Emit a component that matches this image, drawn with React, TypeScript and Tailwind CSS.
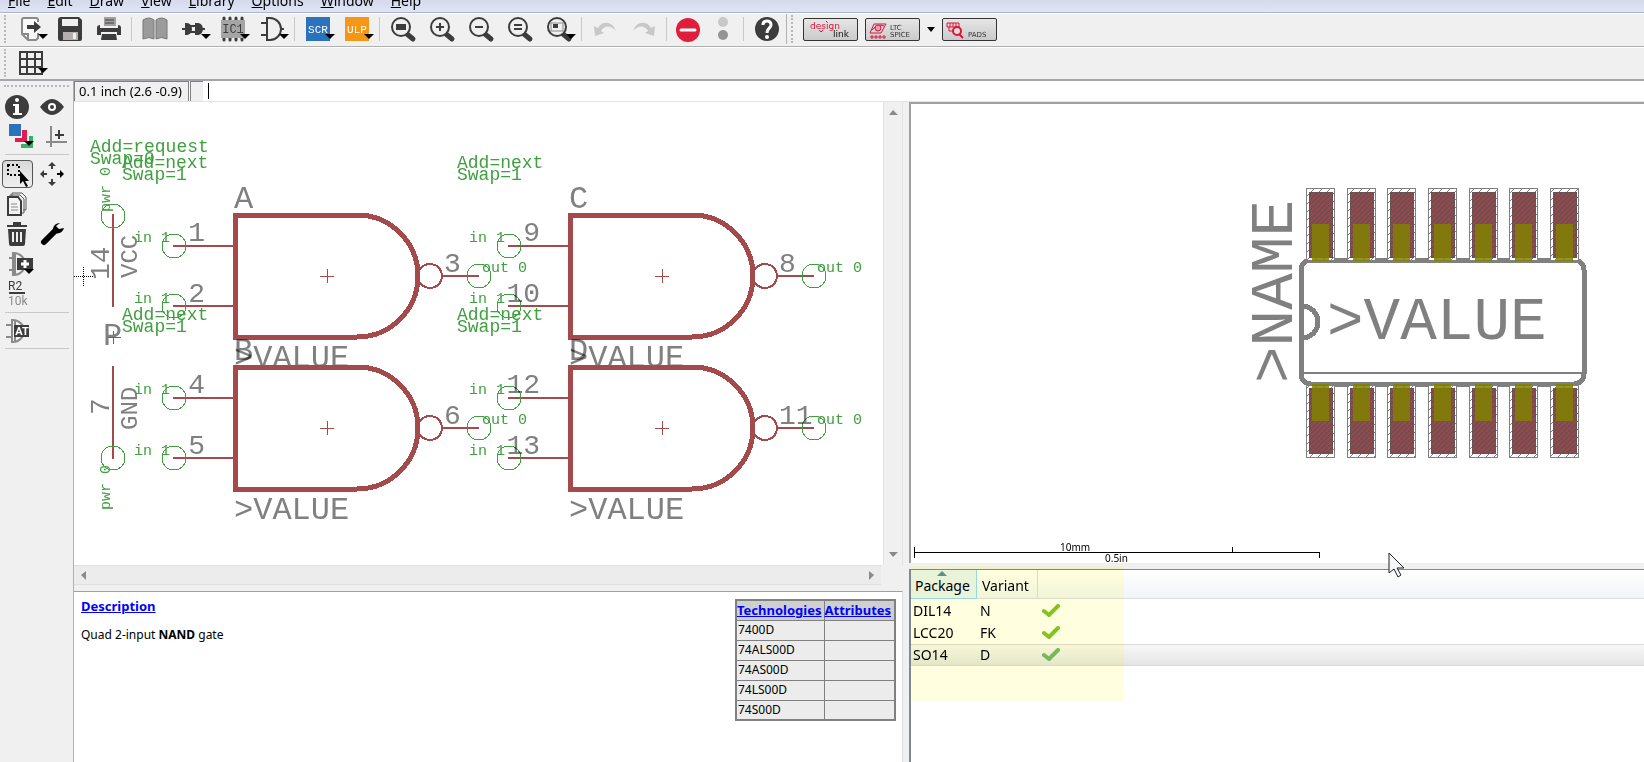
import React from 'react';

const menus = ['File', 'Edit', 'Draw', 'View', 'Library', 'Options', 'Window', 'Help'];

const technologies = ['7400D', '74ALS00D', '74AS00D', '74LS00D', '74S00D'];

const packages = [
    { name: 'DIL14', variant: 'N', selected: false },
    { name: 'LCC20', variant: 'FK', selected: false },
    { name: 'SO14', variant: 'D', selected: true },
];

const gates = [
    { x: 253, y: 174, name: 'A', pins: ['1', '2', '3'] },
    { x: 253, y: 326, name: 'B', pins: ['4', '5', '6'] },
    { x: 588, y: 174, name: 'C', pins: ['9', '10', '8'] },
    { x: 588, y: 326, name: 'D', pins: ['12', '13', '11'] },
];

const padColumns = [395, 436, 476, 517, 558, 598, 639];

/* ---------- icons, drawn around their own centre ---------- */

function Icon({ children, menu = false }: { children: React.ReactNode; menu?: boolean }) {
    return (
        <svg width="36" height="28" viewBox="-18 -14 36 28" fill="none" className="shrink-0" aria-hidden="true">
            {children}
            {menu && <path d="M7 5h10l-5 5z" fill="#000" />}
        </svg>
    );
}

function Lens({ children }: { children: React.ReactNode }) {
    return (
        <>
            <path d="M4 5l6 5" stroke="#3c3c3c" strokeWidth="5" strokeLinecap="round" />
            <circle cx="-2" cy="-2" r="9" fill="#f0f0f0" stroke="#3c3c3c" strokeWidth="2" />
            {children}
        </>
    );
}

const topIcons = {
    use: (
        <>
            <path d="M7 -7V-9a2 2 0 0 0-2-2H-7a2 2 0 0 0-2 2V5l6 6H5l2-2V4M-9 5h6v6" stroke="#8a8a8a" strokeWidth="2" fill="#fafafa" />
            <path d="M-4 -4H3V-8l7 6-7 6V0H-4z" fill="#3c3c3c" />
        </>
    ),
    save: (
        <>
            <path d="M-12 -9a3 3 0 0 1 3-3H9l3 3V10a2 2 0 0 1-2 2H-10a2 2 0 0 1-2-2z" fill="#3c3c3c" />
            <path d="M-8 -10H8v7H-8z" fill="#efefef" />
            <path d="M-7 3H8v8H-7z" fill="#b4aeae" />
            <path d="M3 4h3v6H3z" fill="#efefef" />
        </>
    ),
    print: (
        <>
            <path d="M-5 -12H7v9H-5z" fill="#a5a0a0" />
            <path d="M-4 -9h9M-4 -6h9" stroke="#3c3c3c" strokeWidth="1" />
            <path d="M-12 -1a3 3 0 0 1 3-3v3H9v-3a3 3 0 0 1 3 3v7H8V3H-8v3h-4z" fill="#3c3c3c" />
            <path d="M-7 5H7l1 6H-8z" fill="#3c3c3c" />
        </>
    ),
    book: <path d="M-12 -9Q-6 -13 -1 -9V10Q-6 7 -12 10zM1 -9Q6 -13 12 -9V10Q6 7 1 10z" fill="#9b9b9b" stroke="#777" strokeWidth="1" />,
    device: (
        <>
            <path d="M-12 0h3M-4 -3h5M-4 3h5M8 0h3" stroke="#3c3c3c" strokeWidth="2" />
            <path d="M-9 -6h2a5 6 0 0 1 0 12h-2zM1 -6h3a5 6 0 0 1 0 12h-3z" fill="#3c3c3c" />
        </>
    ),
    ic: (
        <>
            <path d="M-9 -11v2M-3 -11v2M3 -11v2M9 -11v2M-9 11V9M-3 11V9M3 11V9M9 11V9" stroke="#3c3c3c" strokeWidth="3" strokeLinecap="round" />
            <path d="M-12 -9H12V9H-12z" fill="#a5a5a5" />
            <text x="0" y="4" fontSize="12" textAnchor="middle" fill="#3c3c3c" className="font-['Liberation_Mono',monospace]">IC1</text>
        </>
    ),
    gate: <path d="M-5 -11h3a11 11 0 0 1 0 22h-3zM-11 -6h6M-11 6h6M9 0h3" stroke="#3c3c3c" strokeWidth="2" />,
    scr: (
        <>
            <path d="M-12 -12H12V12H-12z" fill="#2a72bb" />
            <text x="0" y="4" fontSize="11" textAnchor="middle" fill="#fff" className="font-['Liberation_Mono',monospace]">SCR</text>
        </>
    ),
    ulp: (
        <>
            <path d="M-12 -12H12V12H-12z" fill="#f59616" />
            <text x="0" y="4" fontSize="11" textAnchor="middle" fill="#fff" className="font-['Liberation_Mono',monospace]">ULP</text>
        </>
    ),
    fit: <Lens><path d="M-7 -5H3v6H-7z" fill="#3c3c3c" /></Lens>,
    zoomIn: <Lens><path d="M-6 -2H2M-2 -6V2" stroke="#3c3c3c" strokeWidth="2" /></Lens>,
    zoomOut: <Lens><path d="M-6 -2H2" stroke="#3c3c3c" strokeWidth="2" /></Lens>,
    redraw: <Lens><path d="M-6 -4H2M-6 0H2" stroke="#3c3c3c" strokeWidth="2" /></Lens>,
    select: (
        <Lens>
            <path d="M-8 -6H4V2H-8z" stroke="#8a8a8a" />
            <path d="M-6 -5h5v4h-5z" fill="#3c3c3c" />
        </Lens>
    ),
    undo: <path d="M11 2C8 -8 -3 -9 -7 -1L-11 -3-10 7 -1 4-4 2C-1 -4 6 -4 11 2z" fill="#c8c8c8" />,
    redo: <path d="M-11 2C-8 -8 3 -9 7 -1L11 -3 10 7 1 4 4 2C1 -4 -6 -4 -11 2z" fill="#c8c8c8" />,
    stop: (
        <>
            <circle cx="0" cy="1" r="12" fill="#df1e3c" />
            <path d="M-7 1H7" stroke="#fff" strokeWidth="3" strokeLinecap="round" />
        </>
    ),
    go: (
        <>
            <circle cx="0" cy="-7" r="5" fill="#c8c8c8" />
            <circle cx="0" cy="6" r="5" fill="#949494" />
        </>
    ),
    help: (
        <>
            <circle cx="0" cy="0" r="12" fill="#3c3c3c" />
            <path d="M-4 -4Q-4 -8 0 -8T4 -4C4 -1 0 -1 0 4" stroke="#fff" strokeWidth="3" />
            <circle cx="0" cy="8" r="2" fill="#fff" />
        </>
    ),
    grid: <path d="M-11 -11H11V11H-11zM-4 -11V11M4 -11V11M-11 -4H11M-11 4H11" stroke="#3c3c3c" strokeWidth="2" />,
};

const sideIcons = {
    info: (
        <>
            <circle cx="0" cy="0" r="12" fill="#3c3c3c" />
            <path d="M-4 -3H2V6H5V8H-4V6H-2V-1H-4z" fill="#fff" />
            <circle cx="0" cy="-7" r="2" fill="#fff" />
        </>
    ),
    show: (
        <>
            <path d="M-12 0Q-6 -8 0 -8T12 0Q6 8 0 8T-12 0z" fill="#3c3c3c" />
            <circle cx="0" cy="0" r="3" stroke="#fff" strokeWidth="2" />
        </>
    ),
    layers: (
        <>
            <path d="M4 12V8h8V0h4v12z" fill="#37b06a" />
            <path d="M-2 6V2h7v-8h5V6z" fill="#dc1e50" />
            <path d="M-8 -12H4V0H-8z" fill="#2a72bb" />
        </>
    ),
    mark: (
        <>
            <path d="M-1 -10V11M-6 6H15" stroke="#8a8a8a" strokeWidth="2" />
            <path d="M3 -1h9M7 -6v9" stroke="#3c3c3c" strokeWidth="2" />
        </>
    ),
    group: (
        <>
            <path d="M-9 -9H2V1H-9z" stroke="#000" strokeWidth="2" strokeDasharray="2 2" />
            <path d="M3 -3V10l3-3 3 6 2-1-3-5h4z" fill="#000" />
        </>
    ),
    move: (
        <>
            <path d="M0 -12l4 4H1v3h-2v-3h-3zM0 12l4-4H1V5h-2v3h-3zM-12 0l4-4v3h3v2h-3v3z" fill="#3c3c3c" />
            <path d="M12 0L8 -4v3H5v2h3v3z" fill="#000" />
        </>
    ),
    copy: (
        <>
            <path d="M-5 -8V-11H5l4 4V6H6" stroke="#5a5a5a" />
            <path d="M-7 -6V-9H3l4 4V9H4" stroke="#5a5a5a" />
            <path d="M-9 -7H1l3 4V11H-9z" stroke="#3c3c3c" strokeWidth="2" fill="#f4f4f4" />
            <path d="M-6 0h6M-6 3h7M-6 6h7" stroke="#8a8a8a" />
        </>
    ),
    trash: (
        <>
            <path d="M-10 -9H-4V-12H4v3h6v2H-10z" fill="#3c3c3c" />
            <path d="M-9 -5H9L8 10a2 2 0 0 1-2 2H-6a2 2 0 0 1-2-2z" fill="#3c3c3c" />
            <path d="M-4 -2V8M0 -2V8M4 -2V8" stroke="#efefef" strokeWidth="2" />
        </>
    ),
    wrench: (
        <>
            <path d="M-8 8L3 -3" stroke="#000" strokeWidth="6" strokeLinecap="round" />
            <path d="M8 -11a7 7 0 0 0-7 9 7 7 0 0 0 11-4l-5 1-3-3z" fill="#000" />
        </>
    ),
    add: (
        <>
            <path d="M-4 -11h1a11 11 0 0 1 0 22h-1zM-8 -6h4M-8 6h4M-2 -11V11" stroke="#8a8a8a" strokeWidth="2" />
            <path d="M0 -6H16V6H0z" fill="#3c3c3c" />
            <path d="M4 0h8M8 -4v8" stroke="#fff" strokeWidth="3" />
        </>
    ),
    value: (
        <>
            <text x="-9" y="-4" fontSize="12" fill="#3c3c3c" className="font-[Roboto,sans-serif]">R2</text>
            <path d="M-8 -1H8" stroke="#3c3c3c" strokeWidth="2" />
            <text x="-9" y="11" fontSize="12" fill="#8a8a8a" className="font-[Roboto,sans-serif]">10k</text>
        </>
    ),
    attribute: (
        <>
            <path d="M-5 -11h1a11 11 0 0 1 0 22h-1zM-11 -6h6M-11 6h6M-2 -11V11" stroke="#8a8a8a" strokeWidth="2" />
            <path d="M-3 -6H12V6H-3z" fill="#3c3c3c" />
            <text x="5" y="4" fontSize="11" textAnchor="middle" fill="#fff" className="font-bold font-[Roboto,sans-serif]">AT</text>
        </>
    ),
};

/* ---------- tool bars ---------- */

function Tool({ label, menu, children }: { label: string; menu?: boolean; children: React.ReactNode }) {
    return (
        <button type="button" aria-label={label} title={label} className="flex w-[39px] justify-center">
            <Icon menu={menu}>{children}</Icon>
        </button>
    );
}

function Separator() {
    return <div className="mx-[3px] h-6 w-px bg-[#c8c8c8]" />;
}

function Handle() {
    return <div className="ml-1 h-7 w-0 border-l-2 border-dotted border-[#b8b8b8]" />;
}

function MenuBar() {
    return (
        <nav className="h-[13px] overflow-hidden border-b border-[#aab4d0] bg-linear-to-b from-[#d5daec] to-[#e0e5f4] pl-2">
            <div className="-mt-[9px] flex gap-[17px] text-[14px] leading-5">
                {menus.map((item) => (
                    <button key={item} type="button">
                        <span className="underline">{item[0]}</span>
                        {item.slice(1)}
                    </button>
                ))}
            </div>
        </nav>
    );
}

function LinkButton({ label, children }: { label: string; children: React.ReactNode }) {
    return (
        <button
            type="button"
            aria-label={label}
            className="h-[23px] w-[55px] rounded-xs border border-[#333] bg-linear-to-b from-[#e6e6e6] to-[#cacaca]"
        >
            <svg width="53" height="21" viewBox="0 0 53 21" fill="none" className="font-['DejaVu_Sans',sans-serif]">
                {children}
            </svg>
        </button>
    );
}

function ActionBar() {
    return (
        <div className="flex h-[34px] items-center border-t border-b border-t-white border-b-[#b0b0b0] pb-[2px]">
            <Handle />
            <div className="ml-[5px] flex items-center">
                <Tool label="Use" menu>{topIcons.use}</Tool>
                <Tool label="Save">{topIcons.save}</Tool>
                <Tool label="Print">{topIcons.print}</Tool>
                <Separator />
                <Tool label="Library">{topIcons.book}</Tool>
                <Tool label="Device" menu>{topIcons.device}</Tool>
                <Tool label="Package" menu>{topIcons.ic}</Tool>
                <Tool label="Symbol" menu>{topIcons.gate}</Tool>
                <Separator />
                <Tool label="Script" menu>{topIcons.scr}</Tool>
                <Tool label="User language program" menu>{topIcons.ulp}</Tool>
                <Separator />
                <Tool label="Fit">{topIcons.fit}</Tool>
                <Tool label="Zoom in">{topIcons.zoomIn}</Tool>
                <Tool label="Zoom out">{topIcons.zoomOut}</Tool>
                <Tool label="Redraw">{topIcons.redraw}</Tool>
                <Tool label="Select" menu>{topIcons.select}</Tool>
                <Separator />
                <Tool label="Undo">{topIcons.undo}</Tool>
                <Tool label="Redo">{topIcons.redo}</Tool>
                <Separator />
                <button type="button" aria-label="Stop" className="flex w-[35px] justify-center"><Icon>{topIcons.stop}</Icon></button>
                <button type="button" aria-label="Go" className="flex w-[35px] justify-center"><Icon>{topIcons.go}</Icon></button>
                <Separator />
                <Tool label="Help">{topIcons.help}</Tool>
            </div>
            <div className="h-full w-px bg-[#b0b0b0]" />
            <div className="mr-[10px]"><Handle /></div>
            <div className="flex items-center gap-[7px]">
                <LinkButton label="Design link">
                    <text x="6" y="10" fontSize="9" fill="#dc143c">design</text>
                    <path d="M15 11l2 2 2-2M22 3l1-1" stroke="#dc143c" />
                    <text x="29" y="18" fontSize="9" fill="#111">link</text>
                </LinkButton>
                <LinkButton label="LTC Spice">
                    <path d="M8 5H20L15 14H4z" stroke="#dc143c" />
                    <path d="M6 11Q12 4 18 7" stroke="#dc143c" />
                    <circle cx="12" cy="9" r="3" fill="#e8a0a8" stroke="#dc143c" />
                    <path d="M5 17h2v2H5zM9 17h2v2H9zM13 17h2v2h-2zM17 17h2v2h-2z" stroke="#dc143c" />
                    <text x="24" y="11" fontSize="7" fill="#333">LTC</text>
                    <text x="24" y="18" fontSize="7" fill="#333">SPICE</text>
                </LinkButton>
                <button type="button" aria-label="More" className="w-2">
                    <svg width="8" height="5" viewBox="0 0 8 5"><path d="M0 0h8L4 5z" fill="#000" /></svg>
                </button>
                <LinkButton label="Pads">
                    <path d="M4 4h12v4H4zM7 4v4M10 4v4M13 4v4M6 8v4h4" stroke="#dc143c" />
                    <circle cx="14" cy="12" r="4" fill="#ddd" stroke="#dc143c" strokeWidth="2" />
                    <path d="M16 15l4 4" stroke="#dc143c" strokeWidth="2" />
                    <text x="25" y="18" fontSize="7" fill="#333">PADS</text>
                </LinkButton>
            </div>
        </div>
    );
}

function SideTool({ label, menu, active, children }: { label: string; menu?: boolean; active?: boolean; children: React.ReactNode }) {
    return (
        <button
            type="button"
            aria-label={label}
            className={
                active
                    ? 'flex h-7 w-[31px] items-center justify-center self-center justify-self-center rounded-sm border border-[#555] bg-linear-to-b from-[#d8d8d8] to-[#efefef]'
                    : 'flex items-center justify-center'
            }
        >
            <Icon menu={menu}>{children}</Icon>
        </button>
    );
}

function SideBar() {
    return (
        <aside className="w-[74px] shrink-0 border-r border-[#b0b0b0] pr-1">
            <div className="mt-1 ml-1 border-t-2 border-dotted border-[#b8b8b8]" />
            <div className="mt-[5px] grid auto-rows-[29px] grid-cols-2">
                <SideTool label="Info">{sideIcons.info}</SideTool>
                <SideTool label="Show">{sideIcons.show}</SideTool>
                <SideTool label="Layers" menu>{sideIcons.layers}</SideTool>
                <SideTool label="Mark">{sideIcons.mark}</SideTool>
            </div>
            <div className="my-1 ml-[5px] h-px bg-[#c8c8c8]" />
            <div className="grid auto-rows-[30px] grid-cols-2">
                <SideTool label="Group" active>{sideIcons.group}</SideTool>
                <SideTool label="Move">{sideIcons.move}</SideTool>
                <SideTool label="Copy">{sideIcons.copy}</SideTool>
                <div />
                <SideTool label="Delete">{sideIcons.trash}</SideTool>
                <SideTool label="Change">{sideIcons.wrench}</SideTool>
                <SideTool label="Add" menu>{sideIcons.add}</SideTool>
                <div />
                <SideTool label="Value">{sideIcons.value}</SideTool>
            </div>
            <div className="my-[3px] ml-[5px] h-px bg-[#c8c8c8]" />
            <div className="grid auto-rows-[30px] grid-cols-2">
                <SideTool label="Attribute">{sideIcons.attribute}</SideTool>
            </div>
            <div className="mt-[2px] ml-[5px] h-px bg-[#c8c8c8]" />
        </aside>
    );
}

/* ---------- symbol drawing ---------- */

function Gate({ x, y, name, pins }: { x: number; y: number; name: string; pins: string[] }) {
    return (
        <g transform={`translate(${x} ${y})`}>
            <path d="M-92 -61H30A61 61 0 0 1 30 61H-92z" stroke="#a54a4a" strokeWidth="5" />
            <circle cx="103" cy="0" r="12" stroke="#a54a4a" strokeWidth="2" />
            <path d="M-154 -30H-94M-154 30H-94M115 0H152" stroke="#a54a4a" strokeWidth="2" />
            <path d="M-7 0H7M0 -7V7" stroke="#a54a4a" />
            <g stroke="#40a040">
                <circle cx="-153" cy="-30" r="12" />
                <circle cx="-153" cy="30" r="12" />
                <circle cx="152" cy="0" r="12" />
            </g>
            <g fill="#40a040">
                <text x="-193" y="-34" fontSize="15">in 1</text>
                <text x="-193" y="27" fontSize="15">in 1</text>
                <text x="155" y="-4" fontSize="15">out 0</text>
                <text x="-205" y="-108" fontSize="18">Add=next</text>
                <text x="-205" y="-96" fontSize="18">Swap=1</text>
            </g>
            <g fill="#808080" className="mix-blend-multiply">
                <text x="-122" y="-35" fontSize="28" textAnchor="end">{pins[0]}</text>
                <text x="-122" y="26" fontSize="28" textAnchor="end">{pins[1]}</text>
                <text x="117" y="-4" fontSize="28">{pins[2]}</text>
                <text x="-93" y="-68" fontSize="32">{name}</text>
                <text x="-93" y="91" fontSize="32">&gt;VALUE</text>
            </g>
        </g>
    );
}

function SymbolCanvas() {
    return (
        <svg
            width="809"
            height="463"
            viewBox="0 0 809 463"
            fill="none"
            shapeRendering="crispEdges"
            className="font-['Liberation_Mono',monospace]"
        >
            <path d="M0 174H19M9 165V184" stroke="#000" strokeDasharray="1 1" />
            <path d="M39 112V205M39 264V357" stroke="#a54a4a" strokeWidth="2" />
            <path d="M33 235H47M39 229V242" stroke="#a54a4a" />
            <circle cx="39" cy="114" r="12" stroke="#40a040" />
            <circle cx="39" cy="356" r="12" stroke="#40a040" />
            <g fill="#40a040">
                <text x="16" y="50" fontSize="18">Add=request</text>
                <text x="16" y="62" fontSize="18">Swap=0</text>
                <text transform="translate(36 110) rotate(-90)" fontSize="15">pwr 0</text>
                <text transform="translate(36 408) rotate(-90)" fontSize="15">pwr 0</text>
            </g>
            <g fill="#808080">
                <text transform="translate(35 178) rotate(-90)" fontSize="28">14</text>
                <text transform="translate(35 313) rotate(-90)" fontSize="28">7</text>
                <text transform="translate(63 176) rotate(-90)" fontSize="24">VCC</text>
                <text transform="translate(63 328) rotate(-90)" fontSize="24">GND</text>
                <text x="29" y="243" fontSize="32">P</text>
            </g>
            {gates.map((gate) => (
                <Gate key={gate.name} {...gate} />
            ))}
        </svg>
    );
}

/* ---------- package drawing ---------- */

function Pad({ x, y, stopY, leadY }: { x: number; y: number; stopY: number; leadY: number }) {
    return (
        <g>
            <rect x={x} y={stopY} width="28" height="72" fill="url(#stop)" stroke="#808080" />
            <rect x={x + 3} y={y} width="23" height="65" fill="#a8414b" />
            <rect x={x + 3} y={y} width="23" height="65" fill="url(#copper)" stroke="#6a5252" />
            <rect x={x + 6} y={leadY} width="17" height="37" fill="#808000" fillOpacity="0.85" />
        </g>
    );
}

function PackageCanvas() {
    return (
        <svg
            width="733"
            height="459"
            viewBox="0 0 733 459"
            fill="none"
            shapeRendering="crispEdges"
            className="font-['Liberation_Mono',monospace]"
        >
            <defs>
                <pattern id="stop" width="8" height="8" patternUnits="userSpaceOnUse">
                    <rect width="8" height="8" fill="#fff" />
                    <path d="M0 8L8 0" stroke="#808080" />
                </pattern>
                <pattern id="copper" width="5" height="5" patternUnits="userSpaceOnUse">
                    <path d="M-1 1L1 -1M-1 6L6 -1M4 6L6 4" stroke="#6a5252" strokeWidth="2" shapeRendering="auto" />
                </pattern>
            </defs>
            <rect x="390" y="156" width="283" height="124" rx="10" stroke="#808080" strokeWidth="5" />
            <path d="M390 269H673" stroke="#808080" strokeWidth="2" />
            <path d="M391 202a16 16 0 0 1 0 32" stroke="#808080" strokeWidth="5" />
            {padColumns.map((x) => (
                <g key={x}>
                    <Pad x={x} y={88} stopY={84} leadY={120} />
                    <Pad x={x} y={284} stopY={281} leadY={280} />
                </g>
            ))}
            <g fill="#808080" fontSize="61">
                <text x="416" y="235">&gt;VALUE</text>
                <text transform="translate(381 279) rotate(-90)">&gt;NAME</text>
            </g>
            <path d="M3 443V454M3 448H409M321 448V443M408 448V454" stroke="#000" />
            <g fill="#000" fontSize="10" className="font-['Noto_Sans',sans-serif]">
                <text x="149" y="447">10mm</text>
                <text x="194" y="458">0.5in</text>
            </g>
        </svg>
    );
}

/* ---------- panels ---------- */

function DescriptionPanel() {
    return (
        <section className="mt-[6px] flex flex-1 items-start justify-between border-t border-r border-t-[#a0a0a0] border-r-[#dcdce6] bg-white pt-1 pr-[6px] pb-10 pl-[7px] text-[12px] leading-5">
            <div>
                <a href="#description" className="text-[13px] font-bold text-[#0000ff] underline">Description</a>
                <p className="mt-2">
                    Quad 2-input <b>NAND</b> gate
                </p>
            </div>
            <table className="mt-[3px] w-[161px] table-fixed border-collapse border-2 border-[#808080] text-[12px] leading-[18px]">
                <thead>
                    <tr className="h-5 bg-[#cfcfcf] text-left text-[13px]">
                        <th className="w-[88px] border border-[#808080] p-0">
                            <a href="#technologies" className="text-[#0000ff] underline">Technologies</a>
                        </th>
                        <th className="border border-[#808080] p-0">
                            <a href="#attributes" className="text-[#0000ff] underline">Attributes</a>
                        </th>
                    </tr>
                </thead>
                <tbody>
                    {technologies.map((name) => (
                        <tr key={name} className="h-5 bg-[#ececec]">
                            <td className="border border-[#808080] px-px py-0">{name}</td>
                            <td className="border border-[#808080] py-0" />
                        </tr>
                    ))}
                </tbody>
            </table>
        </section>
    );
}

function Check({ selected }: { selected: boolean }) {
    return (
        <svg width="18" height="14" viewBox="0 0 18 14" fill="none" role="img" aria-label="available">
            <path d="M2 7l5 4 9-9" stroke={selected ? '#78b868' : '#85c226'} strokeWidth="4" strokeLinecap="round" strokeLinejoin="round" />
        </svg>
    );
}

function PackagePanel() {
    return (
        <section className="mt-[6px] flex-1 border-t border-l-2 border-[#828790] bg-white">
            <table className="w-full table-fixed border-separate border-spacing-0 text-[14px] leading-5">
                <thead>
                    <tr className="h-[29px] bg-linear-to-b from-white to-[#f2f4f8] text-left">
                        <th className="relative w-[66px] border-r border-b border-[#96d9f9] bg-[#e8f3fa] p-0 pt-1 pl-1 font-normal">
                            <svg width="10" height="5" viewBox="0 0 10 5" className="absolute top-[1px] left-[26px]">
                                <path d="M0 5L5 0l5 5z" fill="#5e8f9c" />
                            </svg>
                            Package
                        </th>
                        <th className="w-[61px] border-r border-b border-[#d8dce2] p-0 pt-1 pl-[5px] font-normal">Variant</th>
                        <th className="border-b border-[#d8dce2] p-0" aria-label="Status" />
                    </tr>
                </thead>
                <tbody className="before:block before:h-px">
                    {packages.map((item) => (
                        <tr key={item.name} className={item.selected ? 'h-[22px] bg-linear-to-b from-[#f8f8f8] to-[#e4e4e4]' : 'h-[22px]'}>
                            <td className={item.selected ? 'border-y border-[#d9d9d9] p-0 pl-[2px]' : 'p-0 pl-[2px]'}>{item.name}</td>
                            <td className={item.selected ? 'border-y border-[#d9d9d9] p-0 pl-[3px]' : 'p-0 pl-[3px]'}>{item.variant}</td>
                            <td className={item.selected ? 'border-y border-[#d9d9d9] p-0 pl-1' : 'p-0 pl-1'}>
                                <Check selected={item.selected} />
                            </td>
                        </tr>
                    ))}
                </tbody>
            </table>
        </section>
    );
}

export default function App() {
    return (
        <div className="flex min-h-screen flex-col overflow-hidden bg-[#f0f0f0] font-['Noto_Sans',sans-serif] text-black">
            <MenuBar />
            <ActionBar />
            <div className="flex h-[34px] items-center border-t border-b-2 border-t-white border-b-[#a5a5ab] pb-[2px]">
                <Handle />
                <div className="ml-[5px]">
                    <Tool label="Grid" menu>{topIcons.grid}</Tool>
                </div>
            </div>
            <div className="flex flex-1">
                <SideBar />
                <main className="flex min-w-0 flex-1 flex-col">
                    <div className="flex h-[21px] border-b border-[#e2e3ea] bg-white">
                        <output className="border-t border-r border-l border-[#808080] bg-[#f0f0f0] pr-[6px] pl-1 text-[13px] leading-[18px] whitespace-nowrap">
                            0.1 inch (2.6 -0.9)
                        </output>
                        <div className="ml-px w-[13px] border-t border-l border-[#808080] bg-[#f0f0f0]" />
                        <div className="my-[2px] ml-[5px] w-px bg-black" />
                        <input type="text" aria-label="Command" className="min-w-0 flex-1 bg-white px-1 text-[13px] outline-none" />
                    </div>
                    <div className="grid flex-1 grid-cols-[829fr_735fr] gap-[6px]">
                        <div className="flex min-w-0 flex-col">
                            <div className="flex">
                                <div className="min-w-0 flex-1 overflow-hidden bg-white">
                                    <SymbolCanvas />
                                </div>
                                <div className="flex w-5 shrink-0 flex-col items-center justify-between border-r border-l border-[#e3e3e3] py-2">
                                    <svg width="9" height="5" viewBox="0 0 9 5"><path d="M0 5L4 0l5 5z" fill="#8a8a8a" /></svg>
                                    <svg width="9" height="5" viewBox="0 0 9 5"><path d="M0 0h9L4 5z" fill="#8a8a8a" /></svg>
                                </div>
                            </div>
                            <div className="mr-[22px] flex h-5 items-center justify-between border-y border-[#e0e0e0] bg-[#ececec] px-[7px]">
                                <svg width="5" height="9" viewBox="0 0 5 9"><path d="M5 0v9L0 4z" fill="#8a8a8a" /></svg>
                                <svg width="5" height="9" viewBox="0 0 5 9"><path d="M0 0v9l5-5z" fill="#8a8a8a" /></svg>
                            </div>
                            <DescriptionPanel />
                        </div>
                        <div className="relative flex min-w-0 flex-col">
                            <div className="overflow-hidden border-t-2 border-l-2 border-[#a0a0a0] bg-white">
                                <PackageCanvas />
                            </div>
                            <PackagePanel />
                            <div className="pointer-events-none absolute top-[464px] left-[2px] h-[135px] w-[213px] bg-[#ffffdf] mix-blend-multiply" />
                            <svg width="17" height="27" viewBox="0 0 17 27" className="absolute top-[450px] left-[479px]">
                                <path d="M1 1V21l5-4 4 8 3-2-4-7h7z" fill="#f4f6fa" stroke="#222" strokeLinejoin="round" />
                            </svg>
                        </div>
                    </div>
                </main>
            </div>
        </div>
    );
}
